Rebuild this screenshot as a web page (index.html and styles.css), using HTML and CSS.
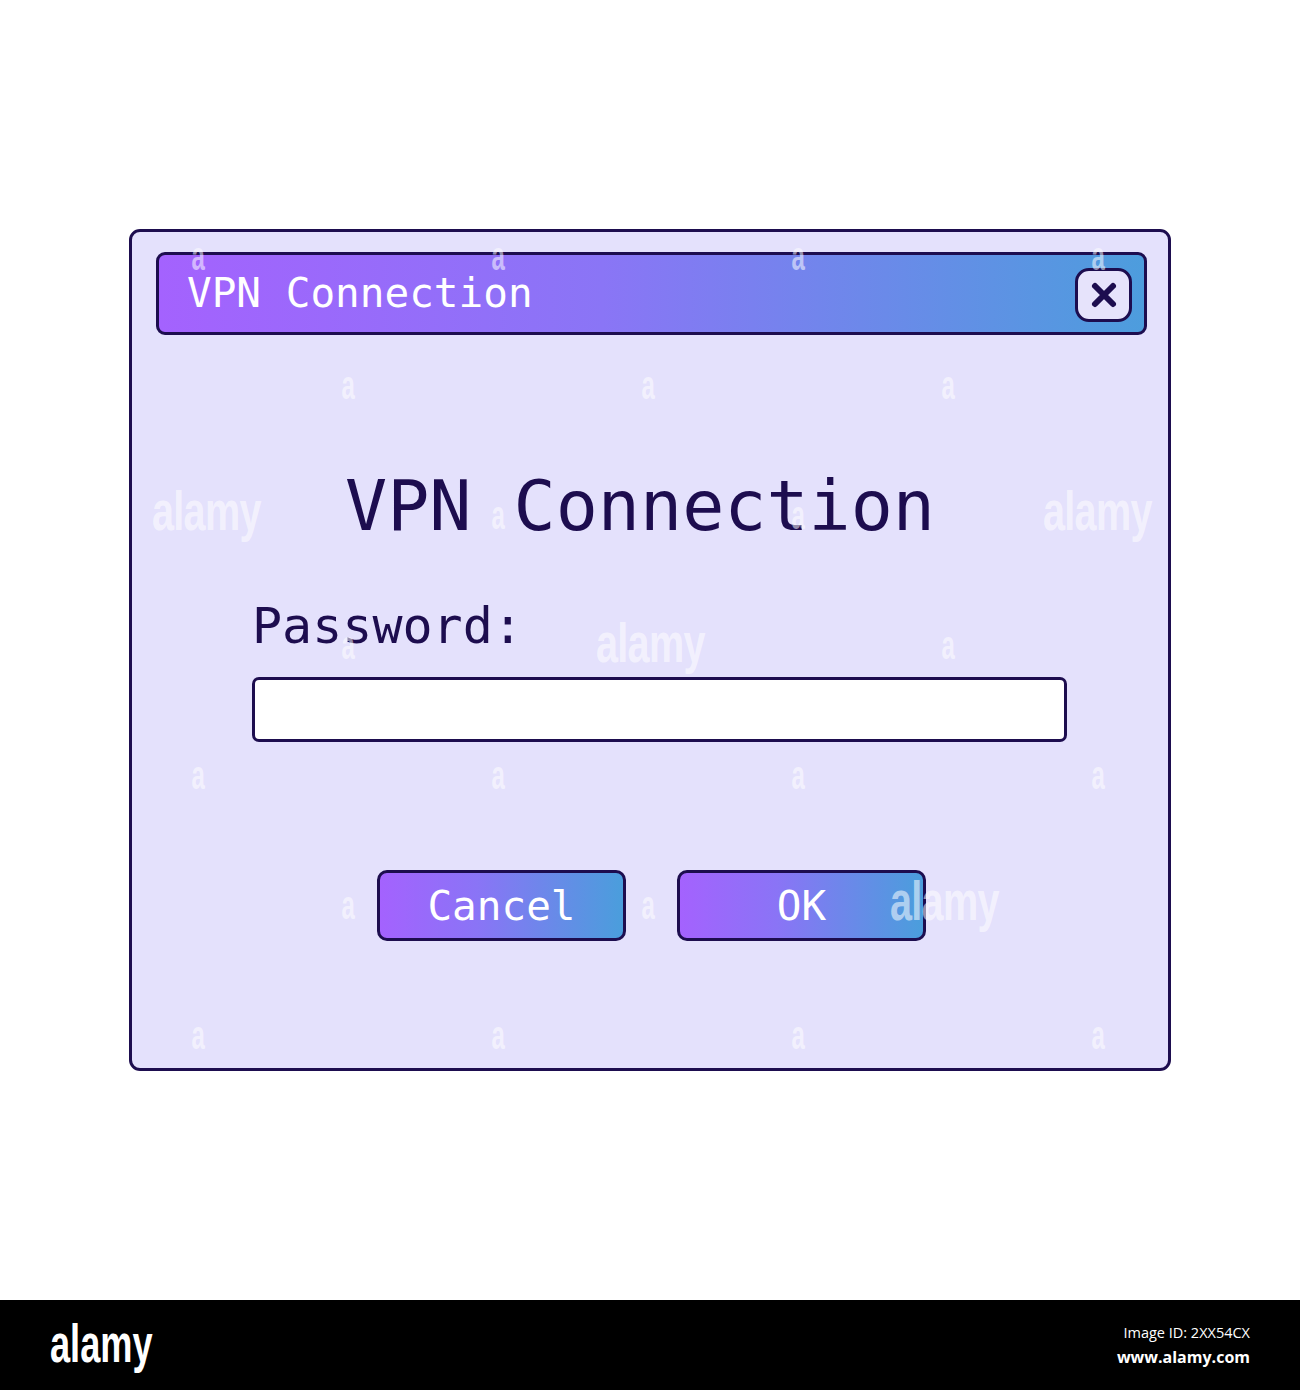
FILE: index.html
```html
<!DOCTYPE html>
<html lang="en">
<head>
    <meta charset="UTF-8">
    <meta name="viewport" content="width=device-width, initial-scale=1.0">
    <title>VPN Connection</title>
    <link rel="stylesheet" href="styles.css">
</head>
<body>

    <div class="page">
        <div class="dialog">
            <div class="titlebar">
                <span class="titlebar-text">VPN Connection</span>
                <button class="close-btn" aria-label="Close">
                    <svg width="28" height="28" viewBox="0 0 28 28">
                        <path d="M5 5 L23 23 M23 5 L5 23" stroke="#1d0d4f" stroke-width="6" stroke-linecap="round" fill="none"/>
                    </svg>
                </button>
            </div>

            <div class="dialog-body">
                <h1>VPN Connection</h1>
                <label for="password">Password:</label>
                <input type="password" id="password">
            </div>

            <div class="actions">
                <button class="btn">Cancel</button>
                <button class="btn">OK</button>
            </div>
        </div>

        <!-- watermark -->
        <span class="wm-a" style="left: 187px; top: 236px;">a</span>
        <span class="wm-a" style="left: 487px; top: 236px;">a</span>
        <span class="wm-a" style="left: 787px; top: 236px;">a</span>
        <span class="wm-a" style="left: 1087px; top: 236px;">a</span>
        <span class="wm-a" style="left: 337px; top: 365px;">a</span>
        <span class="wm-a" style="left: 637px; top: 365px;">a</span>
        <span class="wm-a" style="left: 937px; top: 365px;">a</span>
        <span class="wm-a" style="left: 487px; top: 495px;">a</span>
        <span class="wm-a" style="left: 787px; top: 495px;">a</span>
        <span class="wm-a" style="left: 337px; top: 625px;">a</span>
        <span class="wm-a" style="left: 937px; top: 625px;">a</span>
        <span class="wm-a" style="left: 187px; top: 755px;">a</span>
        <span class="wm-a" style="left: 487px; top: 755px;">a</span>
        <span class="wm-a" style="left: 787px; top: 755px;">a</span>
        <span class="wm-a" style="left: 1087px; top: 755px;">a</span>
        <span class="wm-a" style="left: 337px; top: 885px;">a</span>
        <span class="wm-a" style="left: 637px; top: 885px;">a</span>
        <span class="wm-a" style="left: 187px; top: 1015px;">a</span>
        <span class="wm-a" style="left: 487px; top: 1015px;">a</span>
        <span class="wm-a" style="left: 787px; top: 1015px;">a</span>
        <span class="wm-a" style="left: 1087px; top: 1015px;">a</span>
        <span class="wm-logo" style="left: 152px; top: 484px;">alamy</span>
        <span class="wm-logo" style="left: 1043px; top: 484px;">alamy</span>
        <span class="wm-logo" style="left: 596px; top: 616px;">alamy</span>
        <span class="wm-logo" style="left: 890px; top: 874px;">alamy</span>
    </div>

    <div class="footer">
        <span class="footer-logo">alamy</span>
        <div class="footer-info">
            <p>Image ID: 2XX54CX</p>
            <p class="footer-url">www.alamy.com</p>
        </div>
    </div>

</body>
</html>
```

FILE: styles.css
```css
body {
    margin: 0;
    padding: 0;
    background-color: #ffffff;
    font-family: "DejaVu Sans Mono", "Liberation Mono", monospace;
    color: #1d0d4f;
}

.page {
    position: relative;
    height: 1300px;
    padding-top: 229px;
    box-sizing: border-box;
}

.dialog {
    width: 1042px;
    margin: 0 auto 0 129px;
    box-sizing: border-box;
    padding: 20px 21px 127px 24px;
    background-color: #e4e1fc;
    border: 3px solid #1d0d4f;
    border-radius: 11px;
}

.titlebar {
    height: 83px;
    box-sizing: border-box;
    display: flex;
    align-items: center;
    justify-content: space-between;
    padding: 0 12px 0 28px;
    border: 3px solid #1d0d4f;
    border-radius: 9px;
    background: linear-gradient(90deg, #a462fe 0%, #8a75f6 45%, #4d9ddd 100%);
}

.titlebar-text {
    font-size: 41px;
    line-height: 41px;
    color: #ffffff;
}

.close-btn {
    width: 57px;
    height: 54px;
    box-sizing: border-box;
    margin-top: 3px;
    display: flex;
    align-items: center;
    justify-content: center;
    padding: 0;
    background-color: #e6e3fb;
    border: 3px solid #1d0d4f;
    border-radius: 14px;
    cursor: pointer;
}

.dialog-body {
    padding: 0 80px 0 96px;
    display: flex;
    flex-direction: column;
}

h1 {
    margin: 136px 0 0 93px;
    font-size: 70px;
    line-height: 70px;
    font-weight: normal;
}

label {
    margin-top: 60px;
    font-size: 50px;
    line-height: 50px;
}

input[type="password"] {
    margin-top: 26px;
    height: 65px;
    box-sizing: border-box;
    width: 100%;
    background-color: #ffffff;
    border: 3px solid #1d0d4f;
    border-radius: 7px;
    outline: none;
}

.actions {
    margin-top: 128px;
    display: flex;
    justify-content: center;
    gap: 51px;
}

.btn {
    width: 249px;
    height: 71px;
    box-sizing: border-box;
    padding: 0;
    font-family: "DejaVu Sans Mono", "Liberation Mono", monospace;
    font-size: 41px;
    color: #ffffff;
    background: linear-gradient(90deg, #a462fe 0%, #8a74f6 40%, #4a9edc 100%);
    border: 3px solid #1d0d4f;
    border-radius: 10px;
    cursor: pointer;
}

/* watermark */
.wm-a, .wm-logo {
    position: absolute;
    display: inline-block;
    font-family: "Liberation Sans", Arial, sans-serif;
    font-weight: bold;
    color: rgba(255, 255, 255, 0.55);
    pointer-events: none;
}

.wm-a {
    font-size: 40px;
    line-height: 40px;
    transform: scaleX(0.6);
}

.wm-logo {
    font-size: 55px;
    line-height: 55px;
    letter-spacing: -1px;
    transform: scaleX(0.72);
    transform-origin: left top;
}

.footer {
    height: 90px;
    background-color: #000000;
    display: flex;
    align-items: center;
    justify-content: space-between;
    padding: 0 50px;
}

.footer-logo {
    display: inline-block;
    font-family: "Liberation Sans", Arial, sans-serif;
    font-weight: bold;
    font-size: 54px;
    line-height: 54px;
    color: #ffffff;
    transform: scaleX(0.67);
    transform-origin: left center;
    margin-top: -4px;
}

.footer-info {
    text-align: right;
    color: #ffffff;
    font-family: "Open Sans", "Noto Sans", sans-serif;
}

.footer-info p {
    margin: 0;
    font-size: 14.5px;
    line-height: 25px;
}

.footer-info .footer-url {
    font-size: 16px;
    font-weight: bold;
}
```
